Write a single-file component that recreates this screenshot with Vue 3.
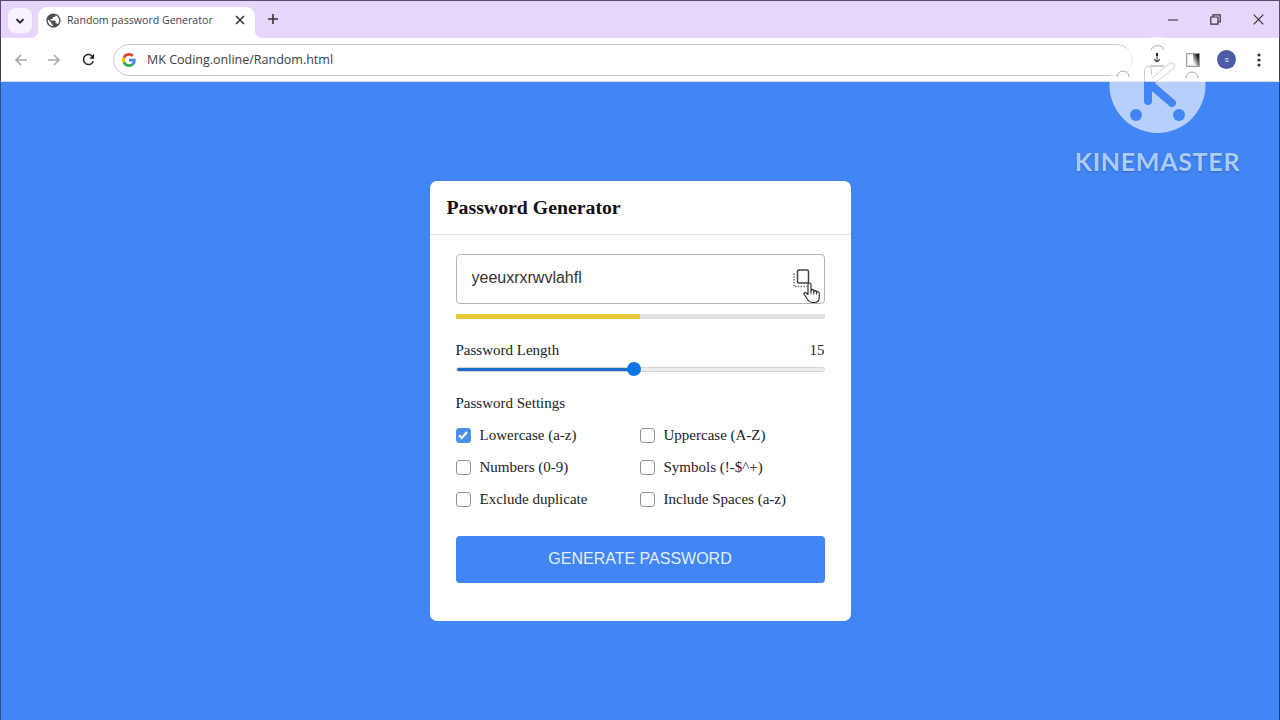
<script setup>
import { ref } from 'vue'

const password = ref('yeeuxrxrwvlahfl')
const length = ref(15)
const options = ref([
  { label: 'Lowercase (a-z)', checked: true },
  { label: 'Uppercase (A-Z)', checked: false },
  { label: 'Numbers (0-9)', checked: false },
  { label: 'Symbols (!-$^+)', checked: false },
  { label: 'Exclude duplicate', checked: false },
  { label: 'Include Spaces (a-z)', checked: false }
])
</script>

<template>
  <div class="window">
    <div class="tabstrip">
      <button class="tabsearch" aria-label="Search tabs">
        <svg width="10" height="10" viewBox="0 0 10 10"><path d="M1.5 3.2 5 6.7l3.5-3.5" fill="none" stroke="#222" stroke-width="1.8" /></svg>
      </button>
      <div class="tab">
        <svg class="globe" width="17" height="17" viewBox="0 0 24 24"><path fill="#4a4d52" d="M12 2C6.48 2 2 6.48 2 12s4.48 10 10 10 10-4.48 10-10S17.52 2 12 2zm-1 17.93c-3.95-.49-7-3.85-7-7.93 0-.62.08-1.21.21-1.79L9 15v1c0 1.1.9 2 2 2v1.93zm6.9-2.54c-.26-.81-1-1.39-1.9-1.39h-1v-3c0-.55-.45-1-1-1H8v-2h2c.55 0 1-.45 1-1V7h2c1.1 0 2-.9 2-2v-.41c2.93 1.19 5 4.06 5 7.41 0 2.08-.8 3.97-2.1 5.39z" /></svg>
        <span class="tabtitle">Random password Generator</span>
        <svg width="10" height="10" viewBox="0 0 10 10"><path d="M1 1l8 8M9 1 1 9" stroke="#333" stroke-width="1.5" /></svg>
      </div>
      <svg class="plus" width="12" height="12" viewBox="0 0 12 12"><path d="M6 1v10M1 6h10" stroke="#333" stroke-width="1.6" /></svg>
      <div class="winctl">
        <svg width="10" height="10" viewBox="0 0 10 10"><path d="M0 5h10" stroke="#444" stroke-width="1.2" /></svg>
        <svg width="11" height="11" viewBox="0 0 11 11"><path d="M.8 3h7.2v7.2H.8zM3 3V.8h7.2V8H8" fill="none" stroke="#333" stroke-width="1.2" /></svg>
        <svg width="11" height="11" viewBox="0 0 11 11"><path d="M.7.7l9.6 9.6M10.3.7.7 10.3" stroke="#333" stroke-width="1.2" /></svg>
      </div>
    </div>

    <div class="toolbar">
      <div class="navs">
        <svg width="14" height="14" viewBox="0 0 14 14"><path d="M13 7H2M7 2 2 7l5 5" fill="none" stroke="#a8a8a8" stroke-width="1.6" /></svg>
        <svg width="14" height="14" viewBox="0 0 14 14"><path d="M1 7h11M7 2l5 5-5 5" fill="none" stroke="#a8a8a8" stroke-width="1.6" /></svg>
        <svg width="17" height="17" viewBox="0 0 24 24"><path fill="#222" d="M17.65 6.35C16.2 4.9 14.21 4 12 4c-4.42 0-7.99 3.58-7.99 8s3.57 8 7.99 8c3.73 0 6.84-2.55 7.73-6h-2.08c-.82 2.33-3.04 4-5.65 4-3.31 0-6-2.69-6-6s2.69-6 6-6c1.66 0 3.14.69 4.22 1.78L13 11h7V4l-2.35 2.35z" /></svg>
      </div>
      <div class="omnibox">
        <svg width="14" height="14" viewBox="0 0 48 48">
          <path fill="#EA4335" d="M24 9.5c3.54 0 6.71 1.22 9.21 3.6l6.85-6.85C35.9 2.38 30.47 0 24 0 14.62 0 6.51 5.38 2.56 13.22l7.98 6.19C12.43 13.72 17.74 9.5 24 9.5z" />
          <path fill="#4285F4" d="M46.98 24.55c0-1.57-.15-3.09-.38-4.55H24v9.02h12.94c-.58 2.96-2.26 5.48-4.78 7.18l7.73 6c4.51-4.18 7.09-10.36 7.09-17.65z" />
          <path fill="#FBBC05" d="M10.53 28.59c-.48-1.45-.76-2.99-.76-4.59s.27-3.14.76-4.59l-7.98-6.19C.92 16.46 0 20.12 0 24c0 3.88.92 7.54 2.56 10.78l7.97-6.19z" />
          <path fill="#34A853" d="M24 48c6.48 0 11.93-2.13 15.89-5.81l-7.73-6c-2.15 1.45-4.92 2.3-8.16 2.3-6.26 0-11.57-4.22-13.47-9.91l-7.98 6.19C6.51 42.62 14.62 48 24 48z" />
        </svg>
        <span class="url">MK Coding.online/Random.html</span>
      </div>
      <div class="tools">
        <svg width="16" height="16" viewBox="0 0 16 16"><path d="M8 1v3" stroke="#222" stroke-width="2" /><path d="M8 4v6M5 7l3 3 3-3" fill="none" stroke="#444" stroke-width="1.1" /><path d="M1 14h14" stroke="#999" stroke-width="1" /></svg>
        <svg width="14" height="14" viewBox="0 0 14 14"><defs><linearGradient id="sp" x1="0" x2="1" y1="1" y2="0"><stop offset=".2" stop-color="#eee" /><stop offset=".85" stop-color="#111" /></linearGradient></defs><rect x=".7" y=".7" width="12.6" height="12.6" fill="#fff" stroke="#888" /><rect x="7" y="1" width="6" height="12" fill="url(#sp)" /></svg>
        <span class="avatar">s</span>
        <svg width="4" height="14" viewBox="0 0 4 14"><circle cx="2" cy="2" r="1.6" fill="#333" /><circle cx="2" cy="7" r="1.6" fill="#333" /><circle cx="2" cy="12" r="1.6" fill="#333" /></svg>
      </div>
    </div>

    <main class="page">
      <section class="card">
        <h1 class="title">Password Generator</h1>
        <div class="body">
          <div class="field">
            <input class="pw" type="text" readonly :value="password" />
            <svg class="copy" width="18" height="20" viewBox="0 0 18 20">
              <rect x="4.5" y="1" width="11" height="13" rx="1.5" fill="#fff" stroke="#444" stroke-width="1.5" />
              <path d="M1 4.5V17.5H14" fill="none" stroke="#666" stroke-width="1.4" stroke-dasharray="1.4 1.4" />
            </svg>
            <svg class="hand" width="18" height="22" viewBox="0 0 18 21">
              <path d="M5 2a1.5 1.5 0 0 1 3 0v6.5a1.4 1.4 0 0 1 2.8 0v1a1.4 1.4 0 0 1 2.8 0v1a1.3 1.3 0 0 1 2.6 0V15c0 3-2 5-5 5H9c-2 0-3-1-4-2.5L1.2 12c-.8-1.3.8-2.6 2-1.5L5 12z" fill="#fff" stroke="#222" stroke-width="1.1" stroke-linejoin="round" />
              <path d="M8 8.5V12M10.8 9.5V12M13.6 10.5V12" stroke="#222" stroke-width=".9" />
            </svg>
          </div>
          <div class="strength"><div class="strength-fill"></div></div>

          <div class="lenrow">
            <span>Password Length</span>
            <span>{{ length }}</span>
          </div>
          <input class="slider" type="range" min="1" max="30" v-model="length" />

          <div class="settings">Password Settings</div>
          <div class="opts">
            <label v-for="o in options" :key="o.label" class="opt">
              <input v-model="o.checked" class="cb" type="checkbox" />
              <span class="box" :class="{ on: o.checked }">
                <svg v-if="o.checked" width="12" height="12" viewBox="0 0 12 12"><path d="M2 6.3 4.8 9 10 3" fill="none" stroke="#fff" stroke-width="2" /></svg>
              </span>
              <span>{{ o.label }}</span>
            </label>
          </div>

          <button class="gen">GENERATE PASSWORD</button>
        </div>
      </section>
    </main>

    <div class="mark">
      <svg class="logo" width="115" height="110" viewBox="1100 30 115 110">
        <defs>
          <mask id="khole">
            <rect x="1100" y="30" width="115" height="110" fill="#fff" />
            <g fill="none" stroke="#000" stroke-width="8" stroke-linecap="round">
              <path d="M1148 70V101M1151 85 1172 103M1151 80 1170 68" />
            </g>
            <circle cx="1136" cy="115" r="6" fill="#000" />
            <circle cx="1179" cy="115" r="6" fill="#000" />
          </mask>
        </defs>
        <circle cx="1157.5" cy="85" r="48" fill="#fff" fill-opacity=".62" mask="url(#khole)" />
        <g fill="none" stroke="#000" stroke-opacity=".18" stroke-width="1">
          <path d="M1144.500 82V70a3.500 3.500 0 0 1 7 0V75M1152 78 1169 64a3 3 0 0 1 5 4L1155 83" />
          <path d="M1151 50a7 7 0 0 1 13 0" stroke-opacity=".32" />
          <path d="M1117 77a6 6 0 0 1 12 0" stroke-opacity=".32" />
          <path d="M1186 78a6 6 0 0 1 12 0" stroke-opacity=".32" />
        </g>
      </svg>
      <span class="markname">KINEMASTER</span>
    </div>
  </div>
</template>

<style scoped>
.window {
  position: relative;
  width: 1280px;
  height: 720px;
  display: flex;
  flex-direction: column;
  overflow: hidden;
  background: #4285f4;
  font-family: "Liberation Serif", serif;
}

.tabstrip {
  height: 38px;
  flex: none;
  display: flex;
  align-items: flex-end;
  padding-left: 7px;
  background: #e7d6fb;
  border-top: 1px solid #5b4a68;
  border-left: 1px solid #5b4a68;
  border-right: 1px solid #5b4a68;
  box-sizing: border-box;
}

.tabsearch {
  width: 24px;
  height: 25px;
  margin: 0 6px 5px 0;
  padding: 0;
  border: 0;
  border-radius: 8px;
  background: #f8f2fe;
  display: flex;
  align-items: center;
  justify-content: center;
}

.tab {
  position: relative;
  width: 217px;
  height: 31px;
  box-sizing: border-box;
  padding: 0 10px 5px 7px;
  display: flex;
  align-items: center;
  background: #fff;
  border-radius: 9px 9px 0 0;
}

.tab::before,
.tab::after {
  content: "";
  position: absolute;
  bottom: 0;
  width: 8px;
  height: 8px;
}

.tab::before {
  left: -8px;
  background: radial-gradient(circle at 0 0, transparent 8px, #fff 8.5px);
}

.tab::after {
  right: -8px;
  background: radial-gradient(circle at 100% 0, transparent 8px, #fff 8.5px);
}

.globe {
  flex: none;
}

.tabtitle {
  flex: 1;
  margin-left: 5px;
  font: 10.6px "Open Sans", sans-serif;
  color: #3f4347;
  white-space: nowrap;
}

.plus {
  margin: 0 0 13px 12px;
}

.winctl {
  margin: 0 15px 13px auto;
  display: flex;
  align-items: center;
  gap: 32px;
}

.toolbar {
  height: 44px;
  flex: none;
  display: flex;
  align-items: center;
  background: #fff;
  border-bottom: 1px solid #d8d8e0;
  border-left: 1px solid #3c3f58;
  border-right: 1px solid #3c3f58;
  box-sizing: border-box;
}

.navs {
  width: 112px;
  flex: none;
  box-sizing: border-box;
  padding: 0 16px 0 13px;
  display: flex;
  align-items: center;
  justify-content: space-between;
}

.omnibox {
  width: 1020px;
  height: 32px;
  flex: none;
  box-sizing: border-box;
  display: flex;
  align-items: center;
  padding-left: 8px;
  border: 1px solid #c9c9c9;
  border-radius: 16px;
}

.url {
  margin-left: 11px;
  font: 12.5px "Open Sans", sans-serif;
  color: #3c4043;
}

.tools {
  position: relative;
  z-index: 2;
  flex: 1;
  display: flex;
  align-items: center;
  padding: 0 18px 0 16px;
  justify-content: space-between;
}

.tools .avatar {
  margin-left: -3px;
}

.avatar {
  width: 19px;
  height: 19px;
  border-radius: 50%;
  background: #4d5aa8;
  color: #dfe3ff;
  font: 8px/19px "Liberation Sans", sans-serif;
  text-align: center;
}

.page {
  flex: 1;
  display: flex;
  align-items: center;
  justify-content: center;
  border-left: 1px solid #2d4f8e;
  border-right: 1px solid #1f3f80;
}

.card {
  width: 421px;
  height: 440px;
  box-sizing: border-box;
  background: #fff;
  border-radius: 7px;
  color: #222;
}

.title {
  margin: 0;
  height: 54px;
  box-sizing: border-box;
  padding: 0 17px;
  font-size: 19.8px;
  line-height: 52px;
  font-weight: 700;
  color: #111;
  border-bottom: 1px solid #e4e4e4;
}

.body {
  padding: 19px 26px 0;
}

.field {
  position: relative;
  height: 50px;
}

.pw {
  width: 100%;
  height: 100%;
  box-sizing: border-box;
  padding: 0 15px 2px;
  border: 1px solid #b5b5b5;
  border-radius: 4px;
  outline: 0;
  font: 16px "Liberation Sans", sans-serif;
  color: #333;
}

.copy {
  position: absolute;
  left: 337px;
  top: 15px;
}

.hand {
  position: absolute;
  left: 347px;
  top: 28px;
}

.strength {
  height: 5px;
  margin-top: 10px;
  background: #e2e2e2;
}

.strength-fill {
  width: 50%;
  height: 100%;
  background: #e8c93a;
}

.lenrow {
  margin-top: 22px;
  display: flex;
  justify-content: space-between;
  font-size: 15px;
  line-height: 18px;
}

.slider {
  display: block;
  width: 100%;
  height: 14px;
  margin: 3px 0 0;
  appearance: none;
  background: transparent;
}

.slider::-webkit-slider-runnable-track {
  height: 5px;
  box-sizing: border-box;
  border: 1px solid #d4d4d4;
  border-radius: 3px;
  background: linear-gradient(to right, #1a6cc8 48%, #ececec 48%);
}

.slider::-webkit-slider-thumb {
  appearance: none;
  width: 14px;
  height: 14px;
  margin-top: -5.5px;
  border-radius: 50%;
  background: #0a74e8;
}

.settings {
  margin-top: 18px;
  font-size: 15px;
  line-height: 18px;
}

.opts {
  margin-top: 7px;
  display: grid;
  grid-template-columns: 184px 1fr;
  grid-auto-rows: 32px;
}

.opt {
  display: flex;
  align-items: center;
  gap: 9px;
  font-size: 15px;
}

.cb {
  position: absolute;
  opacity: 0;
  pointer-events: none;
}

.box {
  width: 15px;
  height: 15px;
  box-sizing: border-box;
  display: flex;
  align-items: center;
  justify-content: center;
  border: 1.5px solid #8f8f8f;
  border-radius: 3px;
  background: #fff;
}

.box.on {
  background: #4a90e8;
  border-color: #4a90e8;
}

.gen {
  display: block;
  width: 100%;
  height: 47px;
  margin-top: 21px;
  padding: 0 0 2px;
  border: 0;
  border-radius: 4px;
  background: #4285f4;
  color: #e3f0ff;
  font: 16px "Liberation Sans", sans-serif;
}

.mark {
  position: absolute;
  z-index: 1;
  left: 1060px;
  top: 30px;
  width: 195px;
  display: flex;
  flex-direction: column;
  align-items: center;
  pointer-events: none;
}

.markname {
  margin-top: 9px;
  font: 700 25px/1 Lato, sans-serif;
  letter-spacing: .7px;
  color: #a9cdf8;
  text-shadow: 0 1px 2px rgba(40, 70, 130, .5);
}
</style>
